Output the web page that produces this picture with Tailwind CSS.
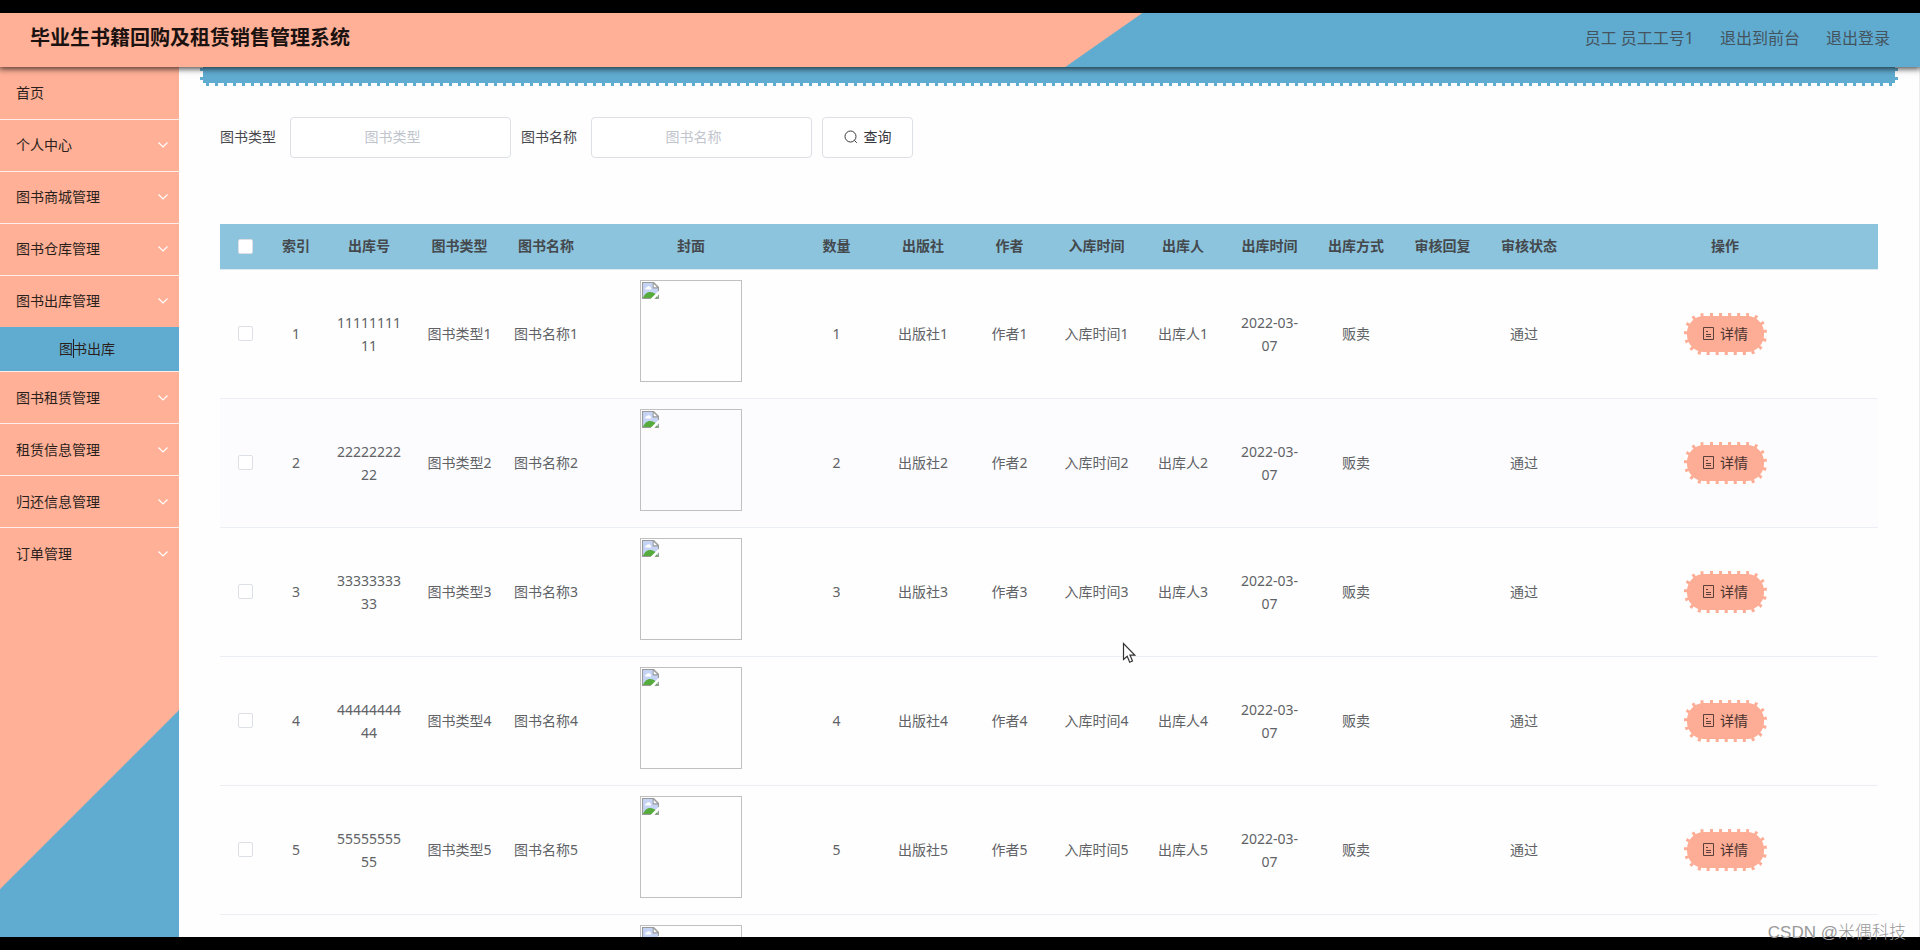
<!DOCTYPE html>
<html lang="zh-CN">
<head>
<meta charset="utf-8">
<meta name="viewport" content="width=device-width, initial-scale=1">
<title>毕业生书籍回购及租赁销售管理系统</title>
<script src="https://cdn.jsdelivr.net/npm/@tailwindcss/browser@4"></script>
</head>
<body class="flex h-screen flex-col overflow-hidden bg-black py-[13px] font-['Noto_Sans','Noto_Sans_CJK_SC',sans-serif] text-sm text-[#606266]">

<svg class="hidden" aria-hidden="true">
  <symbol id="chevron" viewBox="0 0 12 12"><path d="M1.5 3.5 6 8l4.5-4.5" fill="none" stroke="#fff" stroke-width="1.2"/></symbol>
  <symbol id="doc" viewBox="0 0 14 14"><path d="M1.500.5h10v12h-10zM4 4.500h2M4 7.500h5M4 9.500h5" fill="none" stroke="currentColor" stroke-width="0.9"/></symbol>
  <symbol id="broken" viewBox="0 0 16 16">
    <path d="M.5.5H11L15.500 5V15.500H.5Z" fill="#c5d3f5"/>
    <path d="M3 6.500a1.500 1.500 0 0 1 1.500-1.500 2 2 0 0 1 3.700.3 1.300 1.300 0 0 1 .3 1.700H3.200Z" fill="#fff"/>
    <path d="M1 15c1.500-4 4-5.500 7-5.500 3 0 5.500 2 7 5.500Z" fill="#55ab3c"/>
    <path d="M.5 15.500V.5H11L15.500 5V15.500Z" fill="none" stroke="#9a9a9a"/>
    <path d="M10.500.5V5.500H15.500Z" fill="#fff" stroke="#9a9a9a"/>
    <path d="M16.500 7.500 7.500 16.500h3.500l5.500-5.500Z" fill="#fff"/>
  </symbol>
</svg>

<header class="relative z-10 flex h-[54px] shrink-0 items-center justify-between bg-[linear-gradient(145deg,#ffb096_calc(50%+82px),#60acd1_calc(50%+83px))] pr-[30px] pb-1 pl-[30px] shadow-[0_1px_6px_1px_rgba(0,0,0,0.7)]">
  <h1 class="text-xl font-bold text-[#1a1210]">毕业生书籍回购及租赁销售管理系统</h1>
  <nav class="flex gap-[26px] text-base text-[#44545e]">
    <span>员工 员工工号1</span>
    <a href="#">退出到前台</a>
    <a href="#">退出登录</a>
  </nav>
</header>

<div class="flex min-h-0 flex-1">
  <aside class="w-[179px] shrink-0 bg-[linear-gradient(135deg,#ffb096_calc(50%+210px),#60acd1_calc(50%+211px))] text-[#2b1f1c]">
    <ul>
      <li class="h-[53px] border-b border-[#fdeee8]"><a href="#" class="flex h-full items-center pl-4">首页</a></li>
      <li class="h-[52px] border-b border-[#fdeee8]"><button class="flex h-full w-full items-center justify-between pr-2.5 pb-0.5 pl-4">个人中心<svg class="size-3"><use href="#chevron"/></svg></button></li>
      <li class="h-[52px] border-b border-[#fdeee8]"><button class="flex h-full w-full items-center justify-between pr-2.5 pb-0.5 pl-4">图书商城管理<svg class="size-3"><use href="#chevron"/></svg></button></li>
      <li class="h-[52px] border-b border-[#fdeee8]"><button class="flex h-full w-full items-center justify-between pr-2.5 pb-0.5 pl-4">图书仓库管理<svg class="size-3"><use href="#chevron"/></svg></button></li>
      <li class="border-b border-[#fdeee8]">
        <button class="flex h-[51px] w-full items-center justify-between pr-2.5 pb-0.5 pl-4">图书出库管理<svg class="size-3"><use href="#chevron"/></svg></button>
        <a href="#" class="relative flex h-11 items-center bg-[#60acd1] pl-[59px]">图书出库<span class="absolute top-3 left-[73px] h-[19px] w-px bg-[#222]"></span></a>
      </li>
      <li class="h-[52px] border-b border-[#fdeee8]"><button class="flex h-full w-full items-center justify-between pr-2.5 pl-4">图书租赁管理<svg class="size-3"><use href="#chevron"/></svg></button></li>
      <li class="h-[52px] border-b border-[#fdeee8]"><button class="flex h-full w-full items-center justify-between pr-2.5 pl-4">租赁信息管理<svg class="size-3"><use href="#chevron"/></svg></button></li>
      <li class="h-[52px] border-b border-[#fdeee8]"><button class="flex h-full w-full items-center justify-between pr-2.5 pl-4">归还信息管理<svg class="size-3"><use href="#chevron"/></svg></button></li>
      <li class="h-[52px]"><button class="flex h-full w-full items-center justify-between pr-2.5 pl-4">订单管理<svg class="size-3"><use href="#chevron"/></svg></button></li>
    </ul>
  </aside>

  <main class="min-w-0 flex-1 overflow-hidden border-r border-[#ececec] bg-[#fefefe] pr-[21px] pl-[21px]">
    <div class="-mt-8 h-[51px] border-[3px] border-dashed border-white bg-[#60acd1]"></div>

    <div class="px-5 pt-[31px]">
      <form class="flex h-[41px] items-center gap-2.5" onsubmit="return false">
        <label for="type" class="pr-1 pb-0.5 text-[#48484c]">图书类型</label>
        <input id="type" type="text" placeholder="图书类型" class="h-full w-[221px] rounded border border-[#dcdfe6] bg-white pr-4 pb-0.5 text-center placeholder:text-[#c0c4cc]">
        <label for="name" class="pr-1 pb-0.5 text-[#48484c]">图书名称</label>
        <input id="name" type="text" placeholder="图书名称" class="h-full w-[221px] rounded border border-[#dcdfe6] bg-white pr-4 pb-0.5 text-center placeholder:text-[#c0c4cc]">
        <button class="flex h-full w-[91px] items-center justify-center gap-1.5 rounded border border-[#dcdfe6] bg-white pb-0.5 text-[#38383c]">
          <svg class="size-3.5" viewBox="0 0 14 14" fill="none" stroke="currentColor"><circle cx="6.500" cy="6.500" r="5.500"/><path d="m10.300 10.300 2.500 2.500"/></svg>查询
        </button>
      </form>

      <table class="mt-[66px] w-full table-fixed border-collapse text-center">
        <colgroup>
          <col class="w-[50px]"><col class="w-[52px]"><col class="w-[94px]"><col class="w-[87px]"><col class="w-[86px]"><col class="w-[204px]">
          <col class="w-[87px]"><col class="w-[86px]"><col class="w-[87px]"><col class="w-[87px]"><col class="w-[86px]"><col class="w-[87px]"><col class="w-[86px]"><col class="w-[87px]"><col class="w-[86px]"><col>
        </colgroup>
        <thead>
          <tr class="h-[45px] border-b border-[#dfe9f1] bg-[#8cc4dd] text-[#44494e] [&>th]:font-bold">
            <th><input type="checkbox" aria-label="全选" class="block mx-auto size-[15px] appearance-none rounded-xs border border-[#dcdfe6] bg-white"></th>
            <th>索引</th><th>出库号</th><th>图书类型</th><th>图书名称</th><th>封面</th><th>数量</th><th>出版社</th><th>作者</th><th>入库时间</th><th>出库人</th><th>出库时间</th><th>出库方式</th><th>审核回复</th><th>审核状态</th><th>操作</th>
          </tr>
        </thead>
        <tbody id="rows"></tbody>
      </table>
    </div>
  </main>
</div>

<svg class="pointer-events-none absolute top-[642px] left-[1122px] z-20 h-[22px] w-[14px]" viewBox="0 0 14 22"><path d="M1.500 1.500V17.500L5.200 14.200 7.700 20.200 10.500 19 8 13.200H12.800Z" fill="#fff" stroke="#333" stroke-width="1.200"/></svg>
<div class="pointer-events-none absolute right-3.5 bottom-[5px] z-20 font-['Liberation_Sans','Noto_Sans_CJK_SC',sans-serif] text-[17px] leading-6 font-light text-[#999]">CSDN @米偶科技</div>

<script>
const cover = '<td class="pb-1.5"><div role="img" aria-label="封面" class="mx-auto size-[102px] border border-[#c0c0c0] p-px"><svg class="size-[17px]"><use href="#broken"/></svg></div></td>';
const row = n => `
  <tr class="h-[129px] border-b border-[#ebeef5] leading-[23px] ${n === 2 ? 'bg-[#fcfcfe]' : ''}">
    <td><input type="checkbox" aria-label="选择第${n}行" class="block mx-auto size-[15px] appearance-none rounded-xs border border-[#dcdfe6] bg-white"></td>
    <td>${n}</td>
    <td class="px-3 break-all">${String(n).repeat(10)}</td>
    <td>图书类型${n}</td>
    <td>图书名称${n}</td>
    ${cover}
    <td>${n}</td>
    <td>出版社${n}</td>
    <td>作者${n}</td>
    <td>入库时间${n}</td>
    <td>出库人${n}</td>
    <td class="px-2.5">2022-03-07</td>
    <td>贩卖</td>
    <td></td>
    <td class="pr-2.5">通过</td>
    <td><button class="mx-auto flex h-[42px] w-[83px] items-center justify-center gap-1 rounded-[20px] border-[3px] border-dashed border-white bg-[#fdad95] text-[#4a3330]"><svg class="size-3.5"><use href="#doc"/></svg>详情</button></td>
  </tr>`;
document.getElementById('rows').innerHTML = [1, 2, 3, 4, 5].map(row).join('')
  + `<tr class="h-[129px]"><td colspan="5"></td>${cover}<td colspan="10"></td></tr>`;
</script>
</body>
</html>
